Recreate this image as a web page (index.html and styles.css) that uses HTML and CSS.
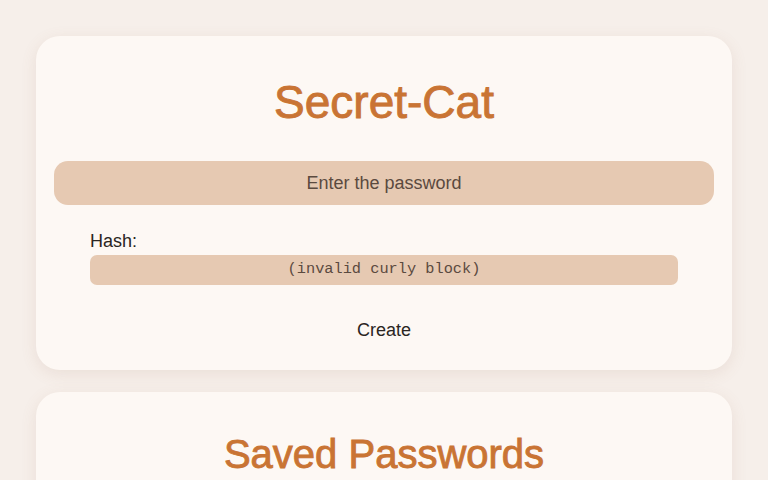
FILE: index.html
```html
<!DOCTYPE html>
<html>
<head>
<meta charset="utf-8">
<link rel="stylesheet" href="styles.css">
</head>
<body>
<main class="page">
  <section class="card">
    <h1 class="title">Secret-Cat</h1>
    <input class="password" type="password" placeholder="Enter the password">
    <div class="hash">
      <label class="hash-label">Hash:</label>
      <div class="hash-box">(invalid curly block)</div>
    </div>
    <button class="create">Create</button>
  </section>
  <section class="card">
    <h2 class="title title-small">Saved Passwords</h2>
  </section>
</main>
</body>
</html>
```
FILE: styles.css
```css
html, body {
  margin: 0;
  padding: 0;
  background: #f6efea;
  font-family: "Liberation Sans", Arial, sans-serif;
}
.page {
  padding: 36px;
  display: flex;
  flex-direction: column;
  gap: 22px;
}
.card {
  background: #fdf8f4;
  border-radius: 24px;
  padding: 18px;
  box-shadow: 0 4px 16px rgba(160, 110, 80, 0.12);
  display: flex;
  flex-direction: column;
  align-items: stretch;
}
.title {
  margin: 22px 0 32px;
  text-align: center;
  color: #c97434;
  font-size: 46px;
  font-weight: normal;
  -webkit-text-stroke: 0.9px #c97434;
  line-height: 53px;
}
.title-small {
  font-size: 40px;
  line-height: 46px;
  margin: 21px 0 24px;
}
.password {
  height: 44px;
  border: none;
  border-radius: 14px;
  background: #e6c9b2;
  font-family: "Liberation Sans", Arial, sans-serif;
  font-size: 18px;
  text-align: center;
  outline: none;
  padding: 0;
}
.password::placeholder {
  color: #5b4a3f;
}
.hash {
  margin: 26px 36px 0;
  display: flex;
  flex-direction: column;
  gap: 3px;
}
.hash-label {
  font-size: 18px;
  color: #2a2522;
  line-height: 21px;
}
.hash-box {
  height: 30px;
  border-radius: 7px;
  background: #e6c9b2;
  font-family: "Liberation Mono", "Courier New", monospace;
  font-size: 15.3px;
  color: #5b4a3f;
  text-align: center;
  line-height: 28px;
}
.create {
  align-self: center;
  margin: 31px 0 7px;
  background: none;
  border: none;
  font-family: "Liberation Sans", Arial, sans-serif;
  font-size: 18px;
  color: #2a2522;
  padding: 4px 8px;
  line-height: 21px;
}
```
